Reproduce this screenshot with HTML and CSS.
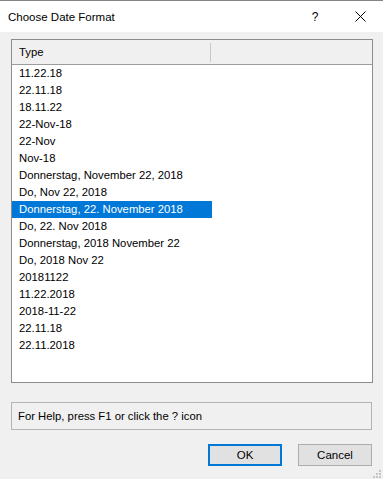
FILE: index.html
```html
<!DOCTYPE html>
<html lang="en">
<head>
    <meta charset="UTF-8">
    <meta name="viewport" content="width=device-width, initial-scale=1.0">
    <title>Choose Date Format</title>
    <link rel="stylesheet" href="styles.css">
</head>
<body>

    <div class="window">
        <!-- Title bar -->
        <div class="titlebar">
            <span class="title">Choose Date Format</span>
            <span class="help">?</span>
            <span class="close">
                <svg width="11" height="11" viewBox="0 0 11 11"><path d="M0.5 0.5 L10.5 10.5 M10.5 0.5 L0.5 10.5" stroke="#000" stroke-width="1" fill="none"/></svg>
            </span>
        </div>

        <div class="client">
            <!-- List of formats -->
            <div class="listbox">
                <div class="list-header">
                    <div class="col-type">Type</div>
                    <div class="col-rest"></div>
                </div>
                <div class="list-body">
                    <div class="row">11.22.18</div>
                    <div class="row">22.11.18</div>
                    <div class="row">18.11.22</div>
                    <div class="row">22-Nov-18</div>
                    <div class="row">22-Nov</div>
                    <div class="row">Nov-18</div>
                    <div class="row">Donnerstag, November 22, 2018</div>
                    <div class="row">Do, Nov 22, 2018</div>
                    <div class="row selected">Donnerstag, 22. November 2018</div>
                    <div class="row">Do, 22. Nov 2018</div>
                    <div class="row">Donnerstag, 2018 November 22</div>
                    <div class="row">Do, 2018 Nov 22</div>
                    <div class="row">20181122</div>
                    <div class="row">11.22.2018</div>
                    <div class="row">2018-11-22</div>
                    <div class="row">22.11.18</div>
                    <div class="row">22.11.2018</div>
                </div>
            </div>

            <div class="statusbox">For Help, press F1 or click the ? icon</div>

            <div class="buttons">
                <button class="btn default">OK</button>
                <button class="btn">Cancel</button>
            </div>
        </div>

        <div class="gripper">
            <svg width="8" height="8" viewBox="0 0 8 8" fill="#c4c4c4">
                <rect x="6" y="0" width="2" height="2"/>
                <rect x="3" y="3" width="2" height="2"/>
                <rect x="6" y="3" width="2" height="2"/>
                <rect x="0" y="6" width="2" height="2"/>
                <rect x="3" y="6" width="2" height="2"/>
                <rect x="6" y="6" width="2" height="2"/>
            </svg>
        </div>
    </div>

</body>
</html>
```

FILE: styles.css
```css
body {
    margin: 0;
    background-color: #f0f0f0;
    font-family: "Liberation Sans", Arial, sans-serif;
    font-size: 11.3px;
    color: #000;
}
.window {
    position: relative;
    width: 383px;
    height: 479px;
    border-top: 1px solid #858585;
    box-sizing: border-box;
    overflow: hidden;
}
.titlebar {
    height: 31px;
    background-color: #fff;
    display: flex;
    align-items: center;
}
.title {
    flex: 1;
    padding-left: 8px;
    font-size: 11.5px;
}
.help {
    width: 12px;
    margin-right: 34px;
    font-size: 12px;
    text-align: center;
}
.close {
    display: flex;
    margin-right: 17px;
}
.client {
    padding: 7px 11px 0 11px;
}
.listbox {
    width: 362px;
    height: 344px;
    box-sizing: border-box;
    border: 1px solid #8c8c8c;
    background-color: #fff;
}
.list-header {
    display: flex;
    height: 25px;
    background-color: #f0f0f0;
    border-bottom: 1px solid #9c9c9c;
    box-sizing: border-box;
}
.col-type {
    width: 199px;
    padding-left: 7px;
    box-sizing: border-box;
    border-right: 1px solid #c8c8c8;
    margin: 3px 0 2px 0;
    line-height: 19px;
}
.col-rest {
    flex: 1;
}
.row {
    width: 200px;
    height: 17px;
    line-height: 17px;
    padding-left: 7px;
    box-sizing: border-box;
    white-space: nowrap;
}
.selected {
    background-color: #0078d7;
    color: #fff;
}
.statusbox {
    margin-top: 19px;
    width: 361px;
    height: 28px;
    box-sizing: border-box;
    border: 1px solid #b4b4b4;
    padding-left: 6px;
    line-height: 26px;
}
.buttons {
    display: flex;
    justify-content: flex-end;
    gap: 16px;
    margin-top: 14px;
    width: 361px;
}
.btn {
    width: 74px;
    height: 22px;
    font-family: "Liberation Sans", Arial, sans-serif;
    font-size: 11.5px;
    background-color: #e1e1e1;
    border: 1px solid #adadad;
    padding: 0;
    color: #000;
}
.btn.default {
    border: 2px solid #0078d7;
}
.gripper {
    position: absolute;
    right: 2px;
    bottom: 1px;
    display: flex;
}
```
